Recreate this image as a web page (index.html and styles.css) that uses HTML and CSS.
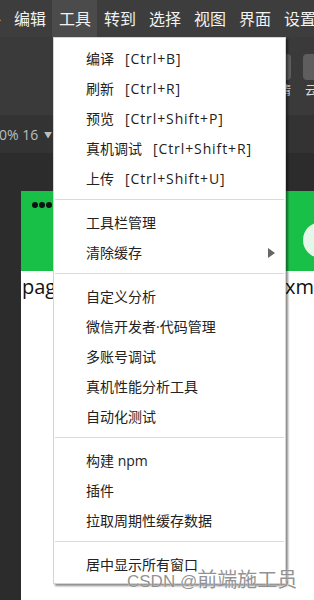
FILE: index.html
```html
<!DOCTYPE html>
<html lang="zh-CN">
<head>
    <meta charset="UTF-8">
    <meta name="viewport" content="width=device-width, initial-scale=1.0">
    <title>微信开发者工具 - 工具菜单</title>
    <link rel="stylesheet" href="styles.css">
</head>
<body>
    <div class="menubar">
        <span class="menubar-item">文件</span>
        <span class="menubar-item">编辑</span>
        <span class="menubar-item active">工具</span>
        <span class="menubar-item">转到</span>
        <span class="menubar-item">选择</span>
        <span class="menubar-item">视图</span>
        <span class="menubar-item">界面</span>
        <span class="menubar-item">设置</span>
    </div>

    <div class="toolbar">
        <div class="tool">
            <div class="tool-btn"></div>
            <span class="tool-label">详情</span>
        </div>
        <div class="tool">
            <div class="tool-btn"></div>
            <span class="tool-label">云开发</span>
        </div>
    </div>

    <div class="devbar">
        <span class="zoom-info">100% 16 <span class="caret">▼</span></span>
    </div>

    <div class="simulator">
        <div class="phone">
            <div class="phone-head">
                <div class="signal">
                    <i></i><i></i><i></i><i></i><i></i>
                </div>
                <div class="capsule"></div>
            </div>
            <div class="page-path">
                <span>pages/index/index</span>
                <span>index.wxml</span>
            </div>
        </div>
    </div>

    <!-- 工具 dropdown -->
    <div class="dropdown">
        <div class="dd-item">编译<span class="shortcut">[Ctrl+B]</span></div>
        <div class="dd-item">刷新<span class="shortcut">[Ctrl+R]</span></div>
        <div class="dd-item">预览<span class="shortcut">[Ctrl+Shift+P]</span></div>
        <div class="dd-item">真机调试<span class="shortcut">[Ctrl+Shift+R]</span></div>
        <div class="dd-item">上传<span class="shortcut">[Ctrl+Shift+U]</span></div>
        <div class="dd-sep"></div>
        <div class="dd-item">工具栏管理</div>
        <div class="dd-item has-sub">清除缓存 <span class="sub-arrow"></span></div>
        <div class="dd-sep"></div>
        <div class="dd-item">自定义分析</div>
        <div class="dd-item">微信开发者·代码管理</div>
        <div class="dd-item">多账号调试</div>
        <div class="dd-item">真机性能分析工具</div>
        <div class="dd-item">自动化测试</div>
        <div class="dd-sep"></div>
        <div class="dd-item">构建 npm</div>
        <div class="dd-item">插件</div>
        <div class="dd-item">拉取周期性缓存数据</div>
        <div class="dd-sep"></div>
        <div class="dd-item">居中显示所有窗口</div>
    </div>

    <div class="watermark">CSDN @<span class="wm-name">前端施工员</span></div>
</body>
</html>
```

FILE: styles.css
```css
body {
    margin: 0;
    width: 314px;
    height: 600px;
    overflow: hidden;
    position: relative;
    background: #2c2c2c;
    font-family: "Open Sans", "Noto Sans CJK SC", sans-serif;
    display: flex;
    flex-direction: column;
}

/* top menu bar */
.menubar {
    height: 37px;
    flex: none;
    display: flex;
    background: #3d3d3d;
    margin-left: -38px;
    font-family: "Noto Sans CJK SC", sans-serif;
    font-size: 16px;
    color: #f2f2f2;
    white-space: nowrap;
}

.menubar-item {
    padding: 0 6px 0 7px;
    line-height: 37px;
}

.menubar-item.active {
    background: #4b4b4b;
}

/* toolbar */
.toolbar {
    height: 78px;
    flex: none;
    background: #3a3a3a;
    display: flex;
    justify-content: flex-end;
    gap: 12px;
    margin-right: -15px;
    box-sizing: border-box;
    padding-top: 17px;
}

.tool {
    width: 26px;
    display: flex;
    flex-direction: column;
}

.tool-btn {
    height: 26px;
    border-radius: 4px;
    background: #5e5e5e;
}

.tool-label {
    margin-top: 2px;
    margin-left: 2px;
    font-family: "Noto Sans CJK SC", sans-serif;
    font-size: 12px;
    line-height: 16px;
    color: #dcdcdc;
    white-space: nowrap;
}

/* device bar */
.devbar {
    height: 38px;
    flex: none;
    background: #333;
    display: flex;
    align-items: center;
}

.zoom-info {
    margin-left: -17px;
    font-size: 14px;
    color: #bdbdbd;
    white-space: nowrap;
}

.caret {
    font-size: 8px;
    vertical-align: 2px;
    margin-left: 2px;
}

/* simulator */
.simulator {
    flex: 1;
    background: #2c2c2c;
    padding: 38px 0 0 21px;
    display: flex;
}

.phone {
    width: 300px;
    flex: none;
    background: #fff;
}

.phone-head {
    height: 80px;
    background: #19c048;
    position: relative;
}

.signal {
    display: flex;
    gap: 1px;
    padding: 11px 0 0 11px;
}

.signal i {
    width: 6px;
    height: 6px;
    border-radius: 50%;
    background: #111;
}

.capsule {
    position: absolute;
    left: 282px;
    top: 31px;
    width: 80px;
    height: 36px;
    border-radius: 18px;
    background: #e4f7e9;
}

.page-path {
    display: flex;
    justify-content: space-between;
    padding: 0 2px 0 1px;
    font-size: 20px;
    line-height: 32px;
    color: #111;
    white-space: nowrap;
}

/* dropdown menu */
.dropdown {
    position: absolute;
    left: 53px;
    top: 37px;
    width: 231px;
    padding: 6px 0 3px;
    background: #fff;
    border: 1px solid #d4d4d4;
    box-shadow: 2px 2px 2px rgba(0, 0, 0, 0.45);
    font-size: 14px;
    color: #222;
}

.dd-item {
    height: 30px;
    line-height: 30px;
    padding-left: 32px;
    white-space: nowrap;
}

.shortcut {
    margin-left: 11px;
    letter-spacing: 0.9px;
}

.dd-item.has-sub {
    display: flex;
    align-items: center;
    justify-content: space-between;
    padding-right: 10px;
}

.sub-arrow {
    width: 0;
    height: 0;
    border-left: 7px solid #666;
    border-top: 5px solid transparent;
    border-bottom: 5px solid transparent;
}

.dd-sep {
    height: 1px;
    margin: 5px 1px 8px;
    background: #dadada;
}

.watermark {
    position: absolute;
    left: 127px;
    top: 569px;
    font-family: "Liberation Sans", "Noto Sans CJK SC", sans-serif;
    font-size: 17px;
    line-height: 22px;
    color: rgba(110, 110, 110, 0.75);
    text-shadow: 0 0 1px #fff;
    white-space: nowrap;
}

.wm-name {
    font-size: 20px;
}
```
